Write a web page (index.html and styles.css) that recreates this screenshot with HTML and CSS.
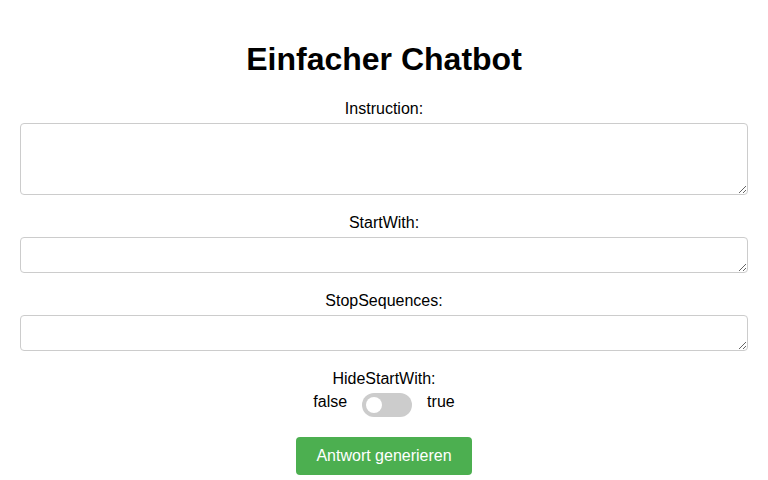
FILE: index.html
```html
<!DOCTYPE html>
<html lang="de">
<head>
<meta charset="utf-8">
<title>Einfacher Chatbot</title>
<link rel="stylesheet" href="styles.css">
</head>
<body>
<main class="page">
  <h1 class="title">Einfacher Chatbot</h1>
  <form class="form">
    <label class="field-label" for="instruction">Instruction:</label>
    <textarea id="instruction" class="field field-tall"></textarea>

    <label class="field-label" for="startwith">StartWith:</label>
    <textarea id="startwith" class="field field-short"></textarea>

    <label class="field-label" for="stopseq">StopSequences:</label>
    <textarea id="stopseq" class="field field-short"></textarea>

    <span class="field-label">HideStartWith:</span>
    <div class="toggle-row">
      <span class="toggle-text">false</span>
      <label class="switch">
        <input type="checkbox" class="switch-input">
        <span class="switch-track"></span>
      </label>
      <span class="toggle-text">true</span>
    </div>

    <button type="button" class="submit">Antwort generieren</button>
  </form>
</main>
</body>
</html>
```

FILE: styles.css
```css
html, body {
  margin: 0;
  padding: 0;
  background: #ffffff;
}

body {
  font-family: "Liberation Sans", Arial, sans-serif;
  font-size: 16px;
  color: #000000;
}

.page {
  padding: 41px 20px 0;
}

.title {
  margin: 0 0 23px;
  font-size: 32px;
  font-weight: bold;
  text-align: center;
  line-height: 36px;
}

.form {
  display: flex;
  flex-direction: column;
}

.field-label {
  display: block;
  text-align: center;
  margin-bottom: 5px;
  line-height: 18px;
}

.field {
  display: block;
  width: 100%;
  box-sizing: border-box;
  border: 1px solid #cccccc;
  border-radius: 4px;
  padding: 8px;
  margin: 0 0 19px;
  font-family: "Liberation Sans", Arial, sans-serif;
  font-size: 16px;
  background: #ffffff;
}

.field-tall {
  height: 72px;
}

.field-short {
  height: 36px;
}

.toggle-row {
  display: flex;
  justify-content: center;
  align-items: flex-start;
  gap: 15px;
  height: 24px;
}

.toggle-text {
  line-height: 18px;
}

.switch {
  position: relative;
  display: block;
  width: 50px;
  height: 24px;
}

.switch-input {
  position: absolute;
  opacity: 0;
  width: 0;
  height: 0;
  margin: 0;
}

.switch-track {
  position: absolute;
  inset: 0;
  background: #cccccc;
  border-radius: 24px;
}

.switch-track::before {
  content: "";
  position: absolute;
  left: 4px;
  top: 4px;
  width: 16px;
  height: 16px;
  border-radius: 50%;
  background: #ffffff;
}

.submit {
  align-self: center;
  margin-top: 20px;
  padding: 10px 20px;
  border: none;
  border-radius: 4px;
  background: #4caf50;
  color: #ffffff;
  font-family: "Liberation Sans", Arial, sans-serif;
  font-size: 16px;
  line-height: 18px;
  cursor: pointer;
}
```
